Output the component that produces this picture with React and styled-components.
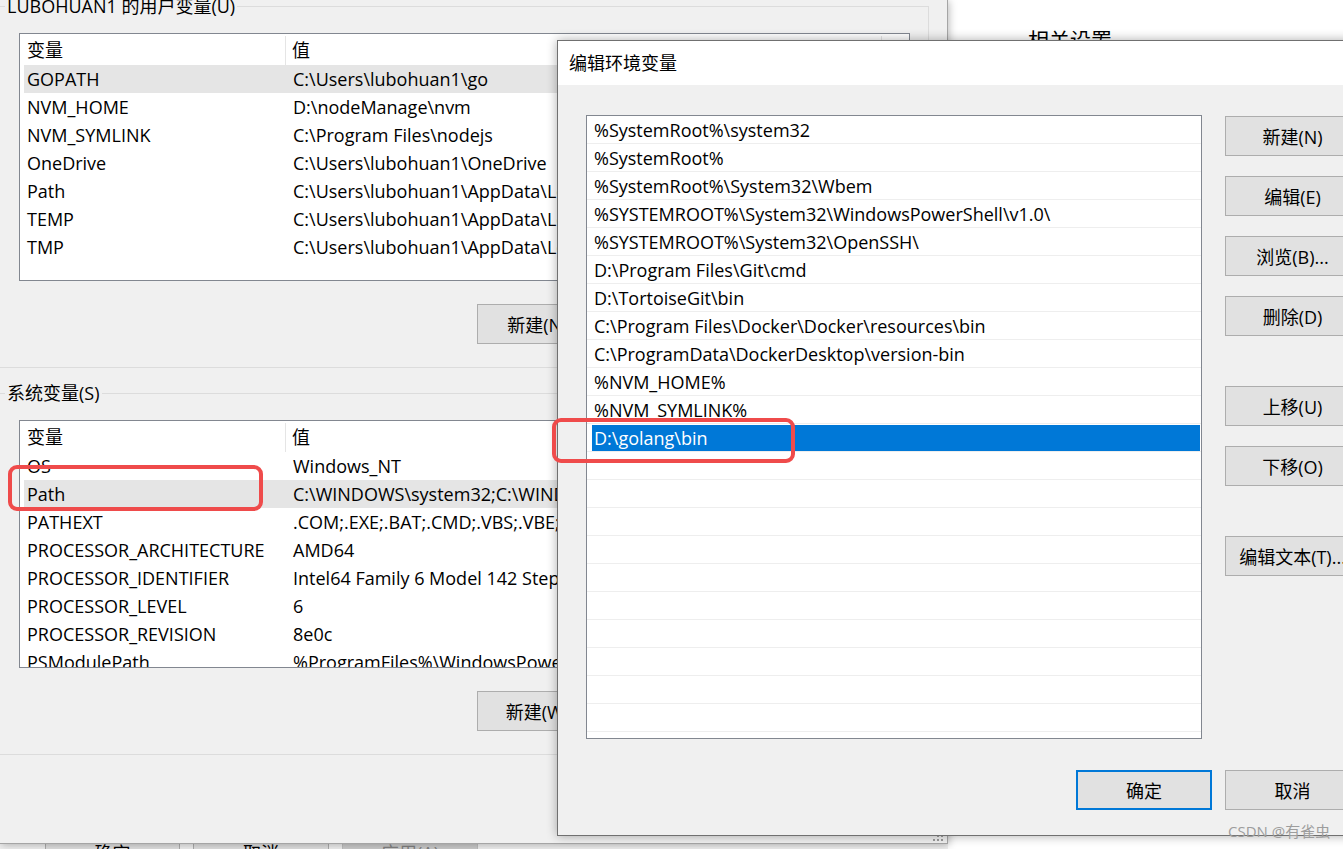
import React from "react";
import styled, { createGlobalStyle } from "styled-components";

const GlobalStyle = createGlobalStyle`
  html, body { margin: 0; padding: 0; }
  body {
    font-family: "Open Sans", "Noto Sans CJK SC", sans-serif;
    font-size: 18px;
    color: #000;
    overflow: hidden;
  }
  * { box-sizing: border-box; }
`;

const Desktop = styled.div`
  position: relative;
  width: 1343px;
  height: 849px;
  overflow: hidden;
  background: #fff;
`;

/* settings app behind everything */
const SettingsPane = styled.div`
  position: absolute;
  left: 948px;
  top: 0;
  width: 395px;
  height: 849px;
  background: #fff;
  padding: 28px 0 0 80px;
`;

const SettingsHeading = styled.div`
  font-size: 21px;
  line-height: 24px;
`;

/* system properties window, only its buttons peek out */
const SysPropsWindow = styled.div`
  position: absolute;
  left: 0;
  top: 790px;
  width: 948px;
  height: 80px;
  background: #f0f0f0;
  display: flex;
  gap: 13px;
  padding: 42px 0 0 45px;
`;

const Button = styled.button`
  font: inherit;
  padding: 0;
  width: ${(p) => p.$w || 135}px;
  height: 40px;
  flex-shrink: 0;
  display: flex;
  align-items: center;
  justify-content: center;
  white-space: nowrap;
  background: ${(p) => (p.$disabled ? "#cccccc" : "#e1e1e1")};
  color: ${(p) => (p.$disabled ? "#838383" : "#000")};
  border: ${(p) =>
    p.$primary ? "2px solid #0078d7" : p.$disabled ? "1px solid #bfbfbf" : "1px solid #adadad"};
  margin-top: ${(p) => p.$space || 0}px;
`;

/* environment variables window */
const EnvWindow = styled.div`
  position: absolute;
  left: 0;
  top: 0;
  width: 948px;
  height: 844px;
  background: #f0f0f0;
  border-right: 1px solid #a5a5a5;
  border-bottom: 1px solid #a5a5a5;
  box-shadow: 1px 1px 8px rgba(0, 0, 0, 0.28);
  padding-top: 6px;
`;

const GroupBox = styled.div`
  position: relative;
  width: 930px;
  margin-left: -1px;
  margin-top: ${(p) => p.$top || 0}px;
  border: 1px solid #dcdcdc;
  padding: 26px 18px 23px 19px;
  display: flex;
  flex-direction: column;
  gap: 23px;
`;

const GroupLabel = styled.div`
  position: absolute;
  left: 5px;
  top: -13px;
  line-height: 24px;
  padding: 0 2px 0 2px;
  background: #f0f0f0;
  white-space: nowrap;
`;

const VarList = styled.div`
  height: 248px;
  border: 1px solid #828790;
  background: #fff;
  overflow: hidden;
`;

const ListHeader = styled.div`
  display: grid;
  grid-template-columns: 266px 596px;
  height: 31px;
`;

const HeaderCell = styled.div`
  padding-left: ${(p) => p.$pad}px;
  border-right: 1px solid #e5e5e5;
  margin: 2px 0 0;
  height: 29px;
  line-height: 29px;
`;

const VarRow = styled.div`
  display: grid;
  grid-template-columns: 266px 1fr;
  height: 28px;
  line-height: 28px;
  margin-left: 4px;
  background: ${(p) => (p.$selected ? "#e5e5e5" : "transparent")};
  white-space: nowrap;
`;

const VarCell = styled.div`
  padding-left: 3px;
  overflow: hidden;
`;

const ButtonRow = styled.div`
  display: flex;
  justify-content: flex-start;
  padding-left: 458px;
`;

const SizeGrip = styled.svg`
  position: absolute;
  right: 3px;
  bottom: 1px;
`;

/* edit dialog */
const EditDialog = styled.div`
  position: absolute;
  left: 557px;
  top: 40px;
  width: 830px;
  height: 796px;
  background: #f0f0f0;
  border: 1px solid #707070;
  box-shadow: 0 0 10px rgba(0, 0, 0, 0.32);
`;

const TitleBar = styled.div`
  height: 44px;
  line-height: 44px;
  background: #fff;
  padding-left: 11px;
`;

const DialogBody = styled.div`
  display: grid;
  grid-template-columns: 616px 135px;
  column-gap: 23px;
  padding: 30px 0 0 28px;
`;

const PathList = styled.div`
  height: 624px;
  border: 1px solid #828790;
  background: #fff;
  overflow: hidden;
`;

const PathRow = styled.div`
  height: 28px;
  border-bottom: 1px solid #eeeeee;
  padding: 1px 1px 0 5px;
`;

const PathText = styled.div`
  height: 26px;
  line-height: 26px;
  padding-left: 2px;
  white-space: nowrap;
  background: ${(p) => (p.$selected ? "#0078d7" : "transparent")};
  color: ${(p) => (p.$selected ? "#fff" : "#000")};
`;

const ButtonColumn = styled.div`
  display: flex;
  flex-direction: column;
  gap: 20px;
  padding-top: 1px;
`;

const Footer = styled.div`
  grid-column: 1 / -1;
  display: flex;
  justify-content: flex-end;
  gap: 13px;
  margin-top: 31px;
`;

/* annotations drawn over the screenshot */
const Highlight = styled.div`
  position: absolute;
  left: ${(p) => p.$x}px;
  top: ${(p) => p.$y}px;
  width: ${(p) => p.$w}px;
  height: ${(p) => p.$h}px;
  border: 4px solid #ef4b4b;
  border-radius: 9px;
`;

const Watermark = styled.div`
  position: absolute;
  left: 1228px;
  top: 821px;
  font-size: 15px;
  line-height: 20px;
  color: #9d9d9d;
  white-space: nowrap;
`;

const userVars = [
  ["GOPATH", "C:\\Users\\lubohuan1\\go"],
  ["NVM_HOME", "D:\\nodeManage\\nvm"],
  ["NVM_SYMLINK", "C:\\Program Files\\nodejs"],
  ["OneDrive", "C:\\Users\\lubohuan1\\OneDrive"],
  ["Path", "C:\\Users\\lubohuan1\\AppData\\Local"],
  ["TEMP", "C:\\Users\\lubohuan1\\AppData\\Local"],
  ["TMP", "C:\\Users\\lubohuan1\\AppData\\Local"],
];

const sysVars = [
  ["OS", "Windows_NT"],
  ["Path", "C:\\WINDOWS\\system32;C:\\WINDOWS"],
  ["PATHEXT", ".COM;.EXE;.BAT;.CMD;.VBS;.VBE;.JS"],
  ["PROCESSOR_ARCHITECTURE", "AMD64"],
  ["PROCESSOR_IDENTIFIER", "Intel64 Family 6 Model 142 Stepping"],
  ["PROCESSOR_LEVEL", "6"],
  ["PROCESSOR_REVISION", "8e0c"],
  ["PSModulePath", "%ProgramFiles%\\WindowsPowerShell"],
];

const paths = [
  "%SystemRoot%\\system32",
  "%SystemRoot%",
  "%SystemRoot%\\System32\\Wbem",
  "%SYSTEMROOT%\\System32\\WindowsPowerShell\\v1.0\\",
  "%SYSTEMROOT%\\System32\\OpenSSH\\",
  "D:\\Program Files\\Git\\cmd",
  "D:\\TortoiseGit\\bin",
  "C:\\Program Files\\Docker\\Docker\\resources\\bin",
  "C:\\ProgramData\\DockerDesktop\\version-bin",
  "%NVM_HOME%",
  "%NVM_SYMLINK%",
  "D:\\golang\\bin",
];

const VariableGroup = ({ label, rows, selected, newLabel, top }) => (
  <GroupBox $top={top}>
    <GroupLabel>{label}</GroupLabel>
    <VarList>
      <ListHeader>
        <HeaderCell $pad={7}>变量</HeaderCell>
        <HeaderCell $pad={6}>值</HeaderCell>
      </ListHeader>
      {rows.map(([name, value]) => (
        <VarRow key={name} $selected={name === selected}>
          <VarCell>{name}</VarCell>
          <VarCell>{value}</VarCell>
        </VarRow>
      ))}
    </VarList>
    <ButtonRow>
      <Button>{newLabel}</Button>
    </ButtonRow>
  </GroupBox>
);

const App = () => {
  const selected = paths.length - 1;
  const emptyRows = Array.from({ length: 12 });
  return (
    <Desktop>
      <GlobalStyle />
      <SettingsPane>
        <SettingsHeading>相关设置</SettingsHeading>
      </SettingsPane>

      <SysPropsWindow>
        <Button>确定</Button>
        <Button $w={136}>取消</Button>
        <Button $w={136} $disabled>应用(A)</Button>
      </SysPropsWindow>

      <EnvWindow>
        <VariableGroup
          label="LUBOHUAN1 的用户变量(U)"
          rows={userVars}
          selected="GOPATH"
          newLabel="新建(N)..."
        />
        <VariableGroup
          label="系统变量(S)"
          rows={sysVars}
          selected="Path"
          newLabel="新建(W)..."
          top={25}
        />
        <SizeGrip width="12" height="12" viewBox="0 0 12 12">
          {[
            [10, 2], [10, 6], [6, 6], [10, 10], [6, 10], [2, 10],
          ].map(([cx, cy]) => (
            <rect key={`${cx}-${cy}`} x={cx - 1} y={cy - 1} width="2" height="2" fill="#9a9a9a" />
          ))}
        </SizeGrip>
      </EnvWindow>

      <EditDialog>
        <TitleBar>编辑环境变量</TitleBar>
        <DialogBody>
          <PathList>
            {paths.map((p, i) => (
              <PathRow key={p}>
                <PathText $selected={i === selected}>{p}</PathText>
              </PathRow>
            ))}
            {emptyRows.map((_, i) => (
              <PathRow key={`empty-${i}`} />
            ))}
          </PathList>
          <ButtonColumn>
            <Button>新建(N)</Button>
            <Button>编辑(E)</Button>
            <Button>浏览(B)...</Button>
            <Button>删除(D)</Button>
            <Button $space={30}>上移(U)</Button>
            <Button>下移(O)</Button>
            <Button $space={30}>编辑文本(T)...</Button>
          </ButtonColumn>
          <Footer>
            <Button $w={136} $primary>确定</Button>
            <Button>取消</Button>
          </Footer>
        </DialogBody>
      </EditDialog>

      <Highlight $x={8} $y={465} $w={255} $h={46} />
      <Highlight $x={552} $y={418} $w={243} $h={45} />
      <Watermark>CSDN @有雀虫</Watermark>
    </Desktop>
  );
};

export default App;
